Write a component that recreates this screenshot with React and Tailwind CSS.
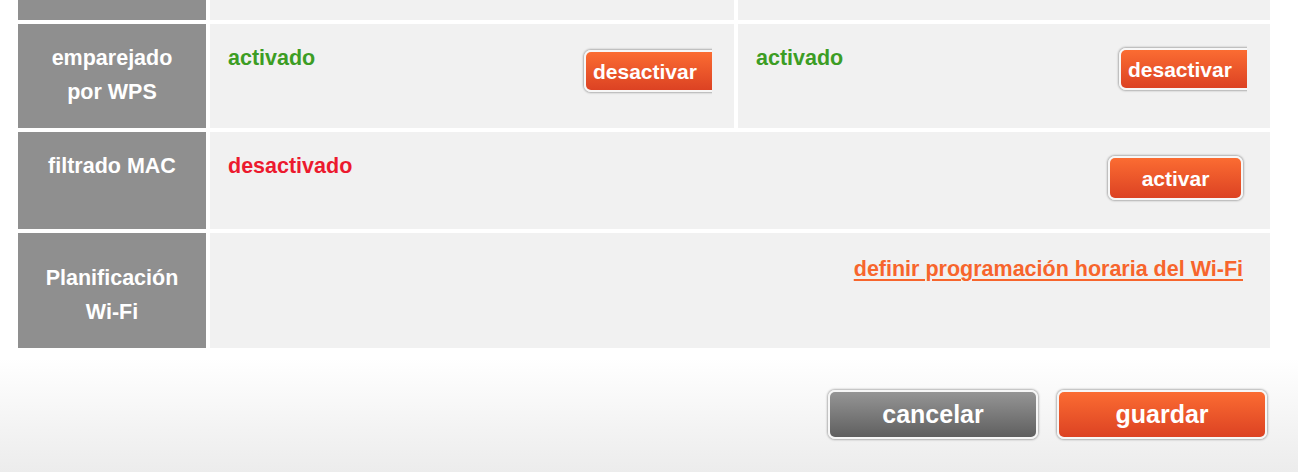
import React from "react";

function OrangeBtn({ children, className = "" }) {
  return (
    <div
      className={
        "rounded-[7px] border-2 border-[#f7f7f7] shadow-[0_0_2px_1px_rgba(0,0,0,0.28)] " +
        className
      }
    >
      <div className="h-full w-full rounded-[5px] bg-[linear-gradient(to_bottom,#fb6c32,#dc4223)] text-white font-bold flex items-center justify-center">
        {children}
      </div>
    </div>
  );
}

function ClippedBtn({ children }) {
  return (
    <div className="w-[131px] h-[48px] overflow-hidden shrink-0 pl-[3px] py-[3px] -ml-[3px] -mt-[3px]">
      <div className="w-[150px] h-[42px] rounded-[7px] border-2 border-[#f7f7f7] shadow-[0_0_2px_1px_rgba(0,0,0,0.28)]">
        <div className="h-full w-full rounded-[5px] bg-[linear-gradient(to_bottom,#fb6c32,#dc4223)] text-white font-bold flex items-center pl-[7px] text-[21px] leading-none whitespace-nowrap">
          {children}
        </div>
      </div>
    </div>
  );
}

export default function App() {
  return (
    <div
      className="w-[1298px] h-[472px] overflow-hidden bg-[linear-gradient(to_bottom,#ffffff_76%,#ececec)] text-[21.5px] font-bold"
      style={{ fontFamily: '"Liberation Sans", Arial, sans-serif' }}
    >
      <div className="ml-[18px] w-[1252px] grid grid-cols-[188px_524px_532px] gap-x-[4px] gap-y-[4px]">
        {/* partial top row */}
        <div className="h-[20px] bg-[#8f8f8f]" />
        <div className="h-[20px] bg-[#f1f1f1]" />
        <div className="h-[20px] bg-[#f1f1f1]" />

        {/* WPS row */}
        <div className="h-[104px] bg-[#8f8f8f] text-white text-center leading-[34px] pt-[17px]">
          emparejado
          <br />
          por WPS
        </div>
        <div className="h-[104px] bg-[#f1f1f1] flex justify-between items-start pl-[18px] pr-[22px] pt-[17px]">
          <span className="text-[#3c9d24] leading-[34px]">activado</span>
          <div className="mt-[9px]">
            <ClippedBtn>desactivar</ClippedBtn>
          </div>
        </div>
        <div className="h-[104px] bg-[#f1f1f1] flex justify-between items-start pl-[18px] pr-[23px] pt-[17px]">
          <span className="text-[#3c9d24] leading-[34px]">activado</span>
          <div className="mt-[7px]">
            <ClippedBtn>desactivar</ClippedBtn>
          </div>
        </div>

        {/* MAC row */}
        <div className="h-[97px] bg-[#8f8f8f] text-white text-center leading-[34px] pt-[17px]">
          filtrado MAC
        </div>
        <div className="col-span-2 h-[97px] bg-[#f1f1f1] flex justify-between items-start pl-[18px] pr-[27px] pt-[17px]">
          <span className="text-[#ec1a2e] leading-[34px]">desactivado</span>
          <OrangeBtn className="mt-[7px] w-[135px] h-[44px]">
            <span className="text-[21px] leading-none">activar</span>
          </OrangeBtn>
        </div>

        {/* Planificación row */}
        <div className="h-[115px] bg-[#8f8f8f] text-white text-center leading-[34px] pt-[28px]">
          Planificación
          <br />
          Wi-Fi
        </div>
        <div className="col-span-2 h-[115px] bg-[#f1f1f1] flex justify-end items-start pr-[27px] pt-[19px]">
          <a href="#" className="text-[#f7652c] underline leading-[34px] decoration-[2px] underline-offset-[3px]">
            definir programación horaria del Wi-Fi
          </a>
        </div>
      </div>

      {/* bottom buttons */}
      <div className="w-[1267px] flex justify-end gap-[19px] mt-[42px]">
        <div className="w-[210px] h-[49px] rounded-[7px] border-2 border-[#f7f7f7] shadow-[0_0_2px_1px_rgba(0,0,0,0.28)]">
          <div className="h-full w-full rounded-[5px] bg-[linear-gradient(to_bottom,#959595,#5f5f5f)] text-white flex items-center justify-center text-[25px] leading-none">
            cancelar
          </div>
        </div>
        <OrangeBtn className="w-[210px] h-[49px]">
          <span className="text-[25px] leading-none">guardar</span>
        </OrangeBtn>
      </div>
    </div>
  );
}
